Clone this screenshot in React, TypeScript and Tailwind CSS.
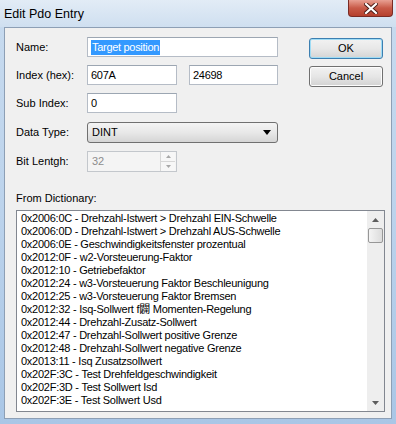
import React from "react";

const items = [
  "0x2006:0C - Drehzahl-Istwert > Drehzahl EIN-Schwelle",
  "0x2006:0D - Drehzahl-Istwert > Drehzahl AUS-Schwelle",
  "0x2006:0E - Geschwindigkeitsfenster prozentual",
  "0x2012:0F - w2-Vorsteuerung-Faktor",
  "0x2012:10 - Getriebefaktor",
  "0x2012:24 - w3-Vorsteuerung Faktor Beschleunigung",
  "0x2012:25 - w3-Vorsteuerung Faktor Bremsen",
  "0x2012:32 - Isq-Sollwert f闢 Momenten-Regelung",
  "0x2012:44 - Drehzahl-Zusatz-Sollwert",
  "0x2012:47 - Drehzahl-Sollwert positive Grenze",
  "0x2012:48 - Drehzahl-Sollwert negative Grenze",
  "0x2013:11 - Isq Zusatzsollwert",
  "0x202F:3C - Test Drehfeldgeschwindigkeit",
  "0x202F:3D - Test Sollwert Isd",
  "0x202F:3E - Test Sollwert Usd",
];

const font = { fontFamily: '"Liberation Sans", "Noto Sans CJK SC", sans-serif' };

function Label({ children, dim }: { children: React.ReactNode; dim?: boolean }) {
  return (
    <div className={`w-[71px] shrink-0 ${dim ? "text-[#6d6d6d]" : "text-black"}`}>{children}</div>
  );
}

function Input({ w, children }: { w: string; children?: React.ReactNode }) {
  return (
    <div
      className={`${w} h-[20px] bg-white border border-[#b5bcc6] border-t-[#9ca6b2] flex items-center pl-[3px] text-black tracking-[-0.3px]`}
    >
      {children}
    </div>
  );
}

export default function App() {
  return (
    <div
      className="w-[396px] h-[424px] flex flex-col bg-gradient-to-b from-[#c8dbef] via-[#bcd3ec] to-[#a9c6e6] text-[11px] leading-[13px]"
      style={font}
    >
      {/* title bar */}
      <div className="h-[27px] flex items-start justify-between pl-[4px] pr-[3px] bg-gradient-to-b from-[#e2ecf6] to-[#cfdff0]">
        <div className="pt-[7px] text-[12.5px] leading-[14px] text-black">Edit Pdo Entry</div>
        <div className="w-[45px] h-[17px] rounded-b-[4px] border border-t-0 border-[#7a2b24] bg-gradient-to-b from-[#e8a093] via-[#c85a48] to-[#b5402d] flex items-center justify-center">
          <svg width="14" height="11" viewBox="0 0 14 11">
            <path
              d="M2 1 L12 10 M12 1 L2 10"
              stroke="#4a1a14"
              strokeWidth="4"
              strokeLinecap="square"
            />
            <path
              d="M2 1 L12 10 M12 1 L2 10"
              stroke="#ffffff"
              strokeWidth="2.2"
              strokeLinecap="square"
            />
          </svg>
        </div>
      </div>

      {/* client */}
      <div className="mx-[4px] h-[392px] border border-[#8d9fb5] bg-[#f0f0f0] flex flex-col pl-[11px] pr-[7px] pt-[9px]">
        <div className="flex">
          {/* form */}
          <div className="flex flex-col w-[262px]">
            <div className="flex items-center h-[20px]">
              <Label>Name:</Label>
              <Input w="w-[191px]">
                <span className="bg-[#3399ff] text-white px-[1px] leading-[15px]">Target position</span>
              </Input>
            </div>
            <div className="flex items-center h-[20px] mt-[8px]">
              <Label>Index (hex):</Label>
              <Input w="w-[90px]">607A</Input>
              <div className="w-[12px]" />
              <Input w="w-[89px]">24698</Input>
            </div>
            <div className="flex items-center h-[20px] mt-[8px]">
              <Label>Sub Index:</Label>
              <Input w="w-[90px]">0</Input>
            </div>
            <div className="flex items-center h-[21px] mt-[9px]">
              <Label>Data Type:</Label>
              <div className="w-[191px] h-[21px] rounded-[3px] border border-[#707070] bg-gradient-to-b from-[#f4f4f4] via-[#e8e8e8] to-[#d5d5d5] flex items-center justify-between pl-[4px] pr-[6px] text-black">
                <span>DINT</span>
                <svg width="8" height="5" viewBox="0 0 8 5">
                  <path d="M0 0 H8 L4 5 Z" fill="#000" />
                </svg>
              </div>
            </div>
            <div className="flex items-center h-[21px] mt-[8px]">
              <Label>Bit Lentgh:</Label>
              <div className="w-[90px] h-[21px] border border-[#c3c7cc] bg-[#f4f4f4] flex items-center justify-between pl-[4px] pr-[1px] text-[#8d8d8d]">
                <span>32</span>
                <div className="flex flex-col w-[15px] h-[19px] border-l border-[#d7d7d7]">
                  <div className="flex-1 flex items-center justify-center border-b border-[#d7d7d7] bg-[#f7f7f7]">
                    <svg width="5" height="3" viewBox="0 0 5 3">
                      <path d="M0 3 L2.5 0 L5 3 Z" fill="#a8a8a8" />
                    </svg>
                  </div>
                  <div className="flex-1 flex items-center justify-center bg-[#f7f7f7]">
                    <svg width="5" height="3" viewBox="0 0 5 3">
                      <path d="M0 0 L5 0 L2.5 3 Z" fill="#a8a8a8" />
                    </svg>
                  </div>
                </div>
              </div>
            </div>
          </div>
          {/* buttons */}
          <div className="flex flex-col ml-[31px] mt-[1px]">
            <div className="w-[74px] h-[21px] rounded-[3px] border border-[#3c7fb1] bg-gradient-to-b from-[#f2f2f2] via-[#e8e8e8] to-[#d4d4d4] shadow-[inset_0_0_0_1px_#9fdcf5] flex items-center justify-center text-black">
              OK
            </div>
            <div className="w-[74px] h-[21px] mt-[7px] rounded-[3px] border border-[#707070] bg-gradient-to-b from-[#f2f2f2] via-[#e6e6e6] to-[#d2d2d2] shadow-[inset_0_0_0_1px_#fcfcfc] flex items-center justify-center text-black">
              Cancel
            </div>
          </div>
        </div>

        <div className="mt-[20px] text-black">From Dictionary:</div>

        <div className="mt-[5px] w-[369px] h-[202px] border border-[#828790] bg-white flex">
          <div className="flex-1 flex flex-col pl-[4px] pt-[1px] text-black overflow-hidden whitespace-nowrap tracking-[-0.25px]">
            {items.map((t) => (
              <div key={t} className="h-[13px] leading-[13px]">
                {t}
              </div>
            ))}
          </div>
          <div className="w-[17px] bg-[#eeeeee] flex flex-col">
            <div className="h-[17px] flex items-center justify-center">
              <svg width="7" height="4" viewBox="0 0 7 4">
                <path d="M0 4 L3.5 0 L7 4 Z" fill="#5d5d5d" />
              </svg>
            </div>
            <div className="mx-[1px] h-[15px] rounded-[2px] border border-[#979797] bg-gradient-to-r from-[#f4f4f4] to-[#dcdcdc]" />
            <div className="flex-1" />
            <div className="h-[17px] flex items-center justify-center">
              <svg width="7" height="4" viewBox="0 0 7 4">
                <path d="M0 0 L7 0 L3.5 4 Z" fill="#5d5d5d" />
              </svg>
            </div>
          </div>
        </div>
      </div>
    </div>
  );
}
